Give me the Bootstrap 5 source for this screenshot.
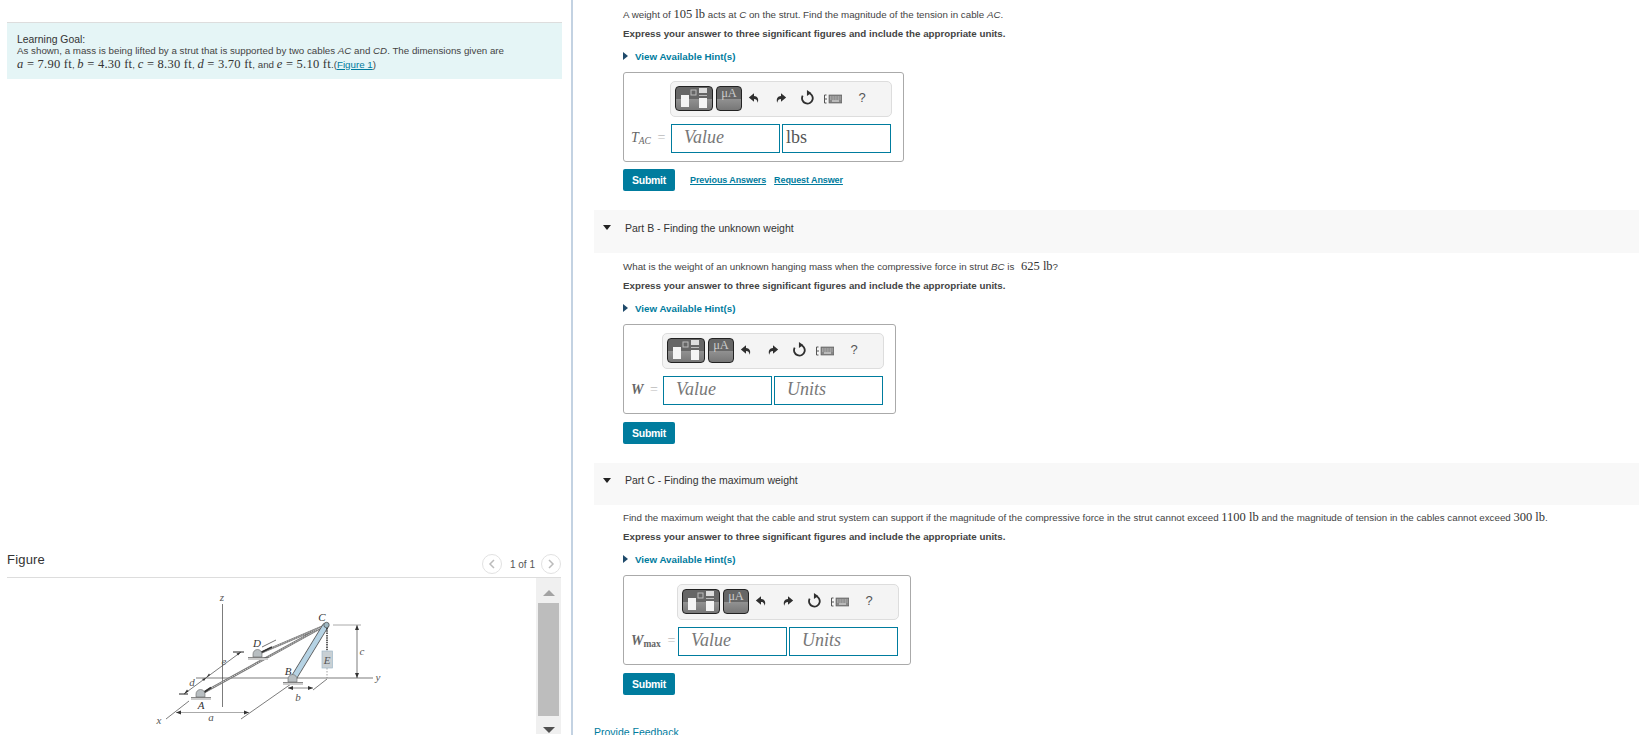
<!DOCTYPE html>
<html lang="en">

<head>
    <meta charset="UTF-8">
    <meta name="viewport" content="width=device-width, initial-scale=1.0">
    <title>Strut and cables</title>
    <link href="https://cdn.jsdelivr.net/npm/bootstrap@5.3.3/dist/css/bootstrap.min.css" rel="stylesheet">
    <style>
        html, body { height: 735px; overflow: hidden; }
        body {
            background: #fff;
            color: #444;
            font-family: "Liberation Sans", Arial, sans-serif;
            font-size: 9.75px;
            line-height: 16px;
        }
        a { color: #007c9e; }
        .math { font-family: "Liberation Serif", serif; font-size: 12.5px; color: #333; }
        .math i { font-family: "Liberation Serif", serif; }

        .split { height: 735px; }
        .left-pane { width: 571px; flex: none; padding-left: 7px; padding-right: 10px; }
        .divider { width: 2px; flex: none; background: #c3d2e2; }
        .right-pane { flex: 1; padding-left: 21px; min-width: 0; }

        .goal { margin-top: 22px; margin-right: -1px; height: 57px; background: #e5f5f6; border-top: 1px solid #ddd; padding: 11px 10px 0; line-height: 12.5px; font-size: 9.75px; }
        .goal .math { letter-spacing: .25px; }
        .goal-title { color: #333; font-size: 10.4px; line-height: 11px; }
        .figure-head { margin-top: 456px; height: 43px; border-bottom: 1px solid #ddd; }
        .figure-head h2 { font-size: 13px; color: #333; margin: 0; line-height: 16px; padding-top: 17px; font-weight: 400; letter-spacing: .2px; }
        .pager { padding-top: 19px; font-size: 10px; color: #555; margin-right: 0; }
        .pager-btn { width: 20px; height: 20px; border: 1px solid #e2e2e2; border-radius: 50%; }
        .pager-num { padding: 3px 6px 0 8px; }
        .figure-body { height: 156px; }
        .figure-art { display: block; margin-left: 134px; }
        .scroll-track { width: 25px; flex: none; background: #f0f0f0; }
        .scroll-thumb { width: 21px; height: 113px; background: #bdbdbd; margin: 7px auto 11px; }
        .tri-up { width: 0; height: 0; border-left: 6px solid transparent; border-right: 6px solid transparent; border-bottom: 6px solid #a3a3a3; margin: 12px auto 0; }
        .tri-down { width: 0; height: 0; border-left: 6px solid transparent; border-right: 6px solid transparent; border-top: 6px solid #505050; margin: 0 auto; }

        .part-body { padding-left: 29px; }
        .part-first { padding-top: 7px; }
        .part-body p { margin: 0; }
        .q-line { height: 16px; line-height: 14px; white-space: nowrap; }
        .q-bold { height: 16px; margin-top: 3px !important; font-weight: 700; color: #444; white-space: nowrap; }
        .hint { margin-top: 6px; height: 16px; padding-top: 2px; font-weight: 700; color: #007c9e; white-space: nowrap; text-decoration: none; display: flex; align-items: center; }
        .hint-arrow { width: 0; height: 0; border-top: 4px solid transparent; border-bottom: 4px solid transparent; border-left: 5px solid #1f4a6b; margin-right: 7px; margin-top: -3px; }

        .answer-box { display: inline-flex; margin-top: 8px; border: 1px solid #aaa; border-radius: 3px; padding: 8px 12px 8px 7px; height: 90px; vertical-align: top; }
        .answer-label { align-self: flex-end; height: 29px; line-height: 27px; white-space: nowrap; color: #666; font-family: "Liberation Serif", serif; font-size: 14px; }
        .answer-label sub { font-size: 9.5px; bottom: -.2em; }
        .answer-label .eq { color: #bbb; margin-left: 3px; }
        .lbl-a { width: 40px; }
        .lbl-b { width: 32px; }
        .lbl-c { width: 47px; }
        .tool-row { height: 36px; width: 222px; margin: 0 -1px; background: #f4f4f4; border: 1px solid #ddd; border-radius: 5px; padding: 4px 0 0 4px; }
        .tpl-btn { height: 25px; border: 1px solid #222; border-radius: 4px; background: linear-gradient(#666 0, #666 50%, #929292 51%, #777 100%); padding: 0; display: block; flex: none; }
        .tpl-main { width: 38px; }
        .tpl-units { width: 26px; margin-left: 3px; color: #ccc; font-family: "Liberation Serif", serif; font-size: 12.5px; line-height: 13px; text-align: center; }
        .tool-ic { flex: none; display: block; color: #2f2f2f; margin-top: 6px; }
        .tool-undo { margin-left: 6px; }
        .tool-redo { margin-left: 15px; }
        .tool-reset { margin-left: 13px; margin-top: 4px; }
        .tool-keys { margin-left: 9px; margin-top: 8px; }
        .tool-q { color: #555; font-size: 13px; line-height: 16px; width: 12px; text-align: center; margin-left: 14px; margin-top: 4px; }
        .field-row { margin-top: 7px; gap: 2px; }
        .field { width: 109px; height: 29px; border: 1.5px solid #007c9e; font-family: "Liberation Serif", serif; font-size: 18px; line-height: 25px; padding-left: 12px; color: #777; font-style: italic; }
        .field-lbs { font-style: normal; color: #555; padding-left: 3px; }

        .submit-row { margin-top: 8px; height: 22px; }
        .submit-tight { margin-top: 7px; }
        .submit-btn { width: 52px; height: 22px; padding: 0; background: #007c9e; color: #fff; border: 0; border-radius: 2px; font-size: 10.5px; font-weight: 700; letter-spacing: -.3px; line-height: 22px; }
        .answer-link { font-size: 9px; letter-spacing: -.1px; font-weight: 700; text-decoration: underline; margin-left: 8px; }
        .answer-link.first { margin-left: 15px; }

        .part-bar { margin-top: 19px; height: 43px; background: #f8f8f8; display: flex; align-items: center; padding-bottom: 8px; font-size: 10.5px; color: #333; margin-bottom: 6px; }
        .part-bar-last { height: 42px; margin-bottom: 5px; }
        .part-caret { width: 0; height: 0; border-left: 4.5px solid transparent; border-right: 4.5px solid transparent; border-top: 5px solid #222; margin-left: 9px; margin-right: 14px; }
        .feedback { margin-top: 29px; font-size: 10.5px; }
    </style>
</head>

<body>
    <svg width="0" height="0" class="position-absolute">
        <symbol id="ic-tpl" viewBox="0 0 36 23">
            <rect x="5" y="8" width="8" height="12" fill="#f4f4f4"/>
            <rect x="15" y="3" width="5" height="5" fill="none" stroke="#bbb"/>
            <rect x="23" y="1" width="8" height="5" fill="#ddd"/>
            <rect x="23" y="8" width="8" height="1" fill="#bbb"/>
            <rect x="23" y="11" width="8" height="10" fill="#f4f4f4"/>
        </symbol>
        <symbol id="ic-undo" viewBox="0 0 14 14">
            <path d="M7 1.500 1 6.500 7 11.500V8.300c2.600 0 3.700 1 4.300 4.200C13 8 11 4.700 7 4.600z" fill="currentColor"/>
        </symbol>
        <symbol id="ic-redo" viewBox="0 0 14 14">
            <path d="M7 1.500 13 6.500 7 11.500V8.300c-2.600 0-3.700 1-4.300 4.200C1 8 3 4.700 7 4.600z" fill="currentColor"/>
        </symbol>
        <symbol id="ic-reset" viewBox="0 0 14 14">
            <path d="M7.500 2.700a5 5 0 1 1-5 2.600" fill="none" stroke="currentColor" stroke-width="1.700"/>
            <path d="M6.500 0v5.500L10.500 2.700z" fill="currentColor"/>
        </symbol>
        <symbol id="ic-keys" viewBox="0 0 18 10">
            <path d="M2.500 1H.5v8h2" fill="none" stroke="#555"/>
            <rect x="1.500" y="4" width="1" height="2" fill="#555"/>
            <rect x="5" y="1" width="13" height="8" fill="#888" stroke="#555" stroke-width=".6"/>
            <path d="M6 3h11M6 5h11" stroke="#ddd" stroke-width=".7" stroke-dasharray="1 .6"/>
            <path d="M8 7h7" stroke="#eee"/>
        </symbol>
    </svg>

    <div class="d-flex split">
        <div class="left-pane d-flex flex-column">
            <div class="goal">
                <div class="goal-title">Learning Goal:</div>
                As shown, a mass is being lifted by a strut that is supported by two cables <i>AC</i> and <i>CD</i>. The dimensions given are<br>
                <span class="math"><i>a</i> = 7.90 ft</span>, <span class="math"><i>b</i> = 4.30 ft</span>, <span class="math"><i>c</i> = 8.30 ft</span>, <span class="math"><i>d</i> = 3.70 ft</span>, and <span class="math"><i>e</i> = 5.10 ft</span>.(<a href="#">Figure 1</a>)
            </div>

            <div class="figure-head d-flex justify-content-between">
                <h2>Figure</h2>
                <div class="pager d-flex align-items-start">
                    <span class="pager-btn d-flex align-items-center justify-content-center">
                        <svg width="8" height="10" viewBox="0 0 8 10"><path d="M6 1 2 5l4 4" fill="none" stroke="#bbb" stroke-width="1.500"/></svg>
                    </span>
                    <span class="pager-num">1 of 1</span>
                    <span class="pager-btn d-flex align-items-center justify-content-center">
                        <svg width="8" height="10" viewBox="0 0 8 10"><path d="M2 1l4 4-4 4" fill="none" stroke="#bbb" stroke-width="1.500"/></svg>
                    </span>
                </div>
            </div>

            <div class="figure-body d-flex justify-content-between">
                <svg class="figure-art" width="260" height="156" viewBox="0 -6 260 156" font-family="Liberation Serif, serif" font-style="italic" font-size="10" fill="#555">
                    <g stroke="#444" stroke-width=".7" fill="none">
                        <path d="M81.500 20V123"/>
                        <path d="M55 94H232"/>
                        <path d="M25 135 48 117"/>
                        <path d="M100 135 150 100"/>
                        <path d="M172 106 186 95"/>
                        <path d="M216 41V94"/>
                        <path d="M43 110 100 68"/>
                        <path d="M38 110H47M92 68H103" stroke="#222" stroke-width="1"/>
                    </g>
                    <path d="M192 41H220" stroke="#aaa" stroke-width="1"/>
                    <path d="M35 128.500H108" stroke="#aaa" stroke-width="1.200"/>
                    <path d="M147 104H172" stroke="#888" stroke-width="1"/>
                    <g fill="#333">
                        <path d="M35 128.500l5-2v4zM108 128.500l-5-2v4zM147 104l5-2v4zM172 104l-5-2v4zM216 41l-2 5h4zM216 94l-2-5h4z"/>
                        <path d="M43 110l3-4.500 1.500 2zM65 94l-4 1 2 2zM65 94l4-3 -1-1.500zM100 68l-4.500 1.500 1.500 2z"/>
                    </g>
                    <path d="M60 110 185 41M117 70 185 41" stroke="#777" stroke-width="2.400"/>
                    <path d="M60 110 185 41M117 70 185 41" stroke="#ddd" stroke-width=".8" stroke-dasharray="1.500 1"/>
                    <path d="M62 109 70 103.500M119 69 131 63" stroke="#333" stroke-width="1.800"/>
                    <path d="M121 63 135 56" stroke="#333" stroke-width=".7"/>
                    <path d="M152 95 185 41" stroke="#555" stroke-width="6.400"/>
                    <path d="M152 95 185 41" stroke="#b6d3e4" stroke-width="5"/>
                    <path d="M186 44V67" stroke="#222" stroke-width="1.400" stroke-dasharray="1.500 .8"/>
                    <path d="M186 84V94" stroke="#888" stroke-width=".8" stroke-dasharray="1.500 1.500"/>
                    <rect x="181" y="67" width="10.500" height="17" fill="#c9d0d4" stroke="#9fb8c8" stroke-width=".7"/>
                    <circle cx="185.500" cy="41" r="2.700" fill="#9fb8c2" stroke="#444" stroke-width=".7"/>
                    <path d="M50 115H70M107 75H127M142 100H162" stroke="#ccc" stroke-width="2"/>
                    <path d="M50 113.500H70M107 73.500H127M142 98.500H162" stroke="#555" stroke-width=".7"/>
                    <path d="M55 113v-3a4.500 4.500 0 0 1 9 0V113zM112 73V70a4.500 4.500 0 0 1 9 0v3zM147 98V95a4.500 4.500 0 0 1 9 0v3z" fill="#b8bec1" stroke="#666" stroke-width=".6"/>
                    <text x="81" y="17" text-anchor="middle" font-size="11">z</text>
                    <text x="181" y="37" text-anchor="middle" font-size="11" fill="#333">C</text>
                    <text x="116" y="63" text-anchor="middle" font-size="11" fill="#333">D</text>
                    <text x="186" y="80" text-anchor="middle" font-size="11">E</text>
                    <text x="83" y="81" text-anchor="middle" font-size="11">e</text>
                    <text x="147" y="91" text-anchor="middle" font-size="11" fill="#333">B</text>
                    <text x="51" y="102" text-anchor="middle" font-size="11">d</text>
                    <text x="237" y="97" text-anchor="middle" font-size="11">y</text>
                    <text x="221" y="71" text-anchor="middle" font-size="11">c</text>
                    <text x="157" y="117" text-anchor="middle" font-size="11">b</text>
                    <text x="60" y="125" text-anchor="middle" font-size="11" fill="#333">A</text>
                    <text x="70" y="137" text-anchor="middle" font-size="11">a</text>
                    <text x="18" y="140" text-anchor="middle" font-size="11">x</text>
                </svg>
                <div class="scroll-track">
                    <div class="tri-up"></div>
                    <div class="scroll-thumb"></div>
                    <div class="tri-down"></div>
                </div>
            </div>
        </div>

        <div class="divider"></div>

        <div class="right-pane">
            <div class="part-body part-first">
                <p class="q-line">A weight of <span class="math">105 lb</span> acts at <i>C</i> on the strut. Find the magnitude of the tension in cable <i>AC</i>.</p>
                <p class="q-bold">Express your answer to three significant figures and include the appropriate units.</p>
                <a class="hint" href="#"><span class="hint-arrow"></span>View Available Hint(s)</a>
                <div class="answer-box">
                    <div class="answer-label lbl-a"><i>T</i><sub><i>AC</i></sub><span class="eq"> =</span></div>
                    <div>
                        <div class="tool-row d-flex align-items-start">
                            <div class="tpl-btn tpl-main"><svg width="36" height="23"><use href="#ic-tpl"/></svg></div>
                            <div class="tpl-btn tpl-units">μA</div>
                            <svg class="tool-ic tool-undo" width="12" height="12"><use href="#ic-undo"/></svg>
                            <svg class="tool-ic tool-redo" width="12" height="12"><use href="#ic-redo"/></svg>
                            <svg class="tool-ic tool-reset" width="15" height="15"><use href="#ic-reset"/></svg>
                            <svg class="tool-ic tool-keys" width="18" height="10"><use href="#ic-keys"/></svg>
                            <span class="tool-q">?</span>
                        </div>
                        <div class="field-row d-flex">
                            <div class="field">Value</div>
                            <div class="field field-lbs">lbs</div>
                        </div>
                    </div>
                </div>
                <div class="submit-row submit-tight d-flex align-items-center">
                    <button class="submit-btn">Submit</button>
                    <a class="answer-link first" href="#">Previous Answers</a>
                    <a class="answer-link" href="#">Request Answer</a>
                </div>
            </div>

            <div class="part-bar"><span class="part-caret"></span>Part B - Finding the unknown weight</div>
            <div class="part-body">
                <p class="q-line">What is the weight of an unknown hanging mass when the compressive force in strut <i>BC</i> is <span class="math ms-1">625 lb</span>?</p>
                <p class="q-bold">Express your answer to three significant figures and include the appropriate units.</p>
                <a class="hint" href="#"><span class="hint-arrow"></span>View Available Hint(s)</a>
                <div class="answer-box">
                    <div class="answer-label lbl-b"><b><i>W</i></b><span class="eq"> =</span></div>
                    <div>
                        <div class="tool-row d-flex align-items-start">
                            <div class="tpl-btn tpl-main"><svg width="36" height="23"><use href="#ic-tpl"/></svg></div>
                            <div class="tpl-btn tpl-units">μA</div>
                            <svg class="tool-ic tool-undo" width="12" height="12"><use href="#ic-undo"/></svg>
                            <svg class="tool-ic tool-redo" width="12" height="12"><use href="#ic-redo"/></svg>
                            <svg class="tool-ic tool-reset" width="15" height="15"><use href="#ic-reset"/></svg>
                            <svg class="tool-ic tool-keys" width="18" height="10"><use href="#ic-keys"/></svg>
                            <span class="tool-q">?</span>
                        </div>
                        <div class="field-row d-flex">
                            <div class="field">Value</div>
                            <div class="field">Units</div>
                        </div>
                    </div>
                </div>
                <div class="submit-row"><button class="submit-btn">Submit</button></div>
            </div>

            <div class="part-bar part-bar-last"><span class="part-caret"></span>Part C - Finding the maximum weight</div>
            <div class="part-body">
                <p class="q-line">Find the maximum weight that the cable and strut system can support if the magnitude of the compressive force in the strut cannot exceed <span class="math">1100 lb</span> and the magnitude of tension in the cables cannot exceed <span class="math">300 lb</span>.</p>
                <p class="q-bold">Express your answer to three significant figures and include the appropriate units.</p>
                <a class="hint" href="#"><span class="hint-arrow"></span>View Available Hint(s)</a>
                <div class="answer-box">
                    <div class="answer-label lbl-c"><b><i>W</i></b><sub><b>max</b></sub><span class="eq"> =</span></div>
                    <div>
                        <div class="tool-row d-flex align-items-start">
                            <div class="tpl-btn tpl-main"><svg width="36" height="23"><use href="#ic-tpl"/></svg></div>
                            <div class="tpl-btn tpl-units">μA</div>
                            <svg class="tool-ic tool-undo" width="12" height="12"><use href="#ic-undo"/></svg>
                            <svg class="tool-ic tool-redo" width="12" height="12"><use href="#ic-redo"/></svg>
                            <svg class="tool-ic tool-reset" width="15" height="15"><use href="#ic-reset"/></svg>
                            <svg class="tool-ic tool-keys" width="18" height="10"><use href="#ic-keys"/></svg>
                            <span class="tool-q">?</span>
                        </div>
                        <div class="field-row d-flex">
                            <div class="field">Value</div>
                            <div class="field">Units</div>
                        </div>
                    </div>
                </div>
                <div class="submit-row"><button class="submit-btn">Submit</button></div>
            </div>
            <div class="feedback"><a class="text-decoration-none" href="#">Provide Feedback</a></div>
        </div>
    </div>

    <script src="https://cdn.jsdelivr.net/npm/bootstrap@5.3.3/dist/js/bootstrap.bundle.min.js"></script>
</body>

</html>
